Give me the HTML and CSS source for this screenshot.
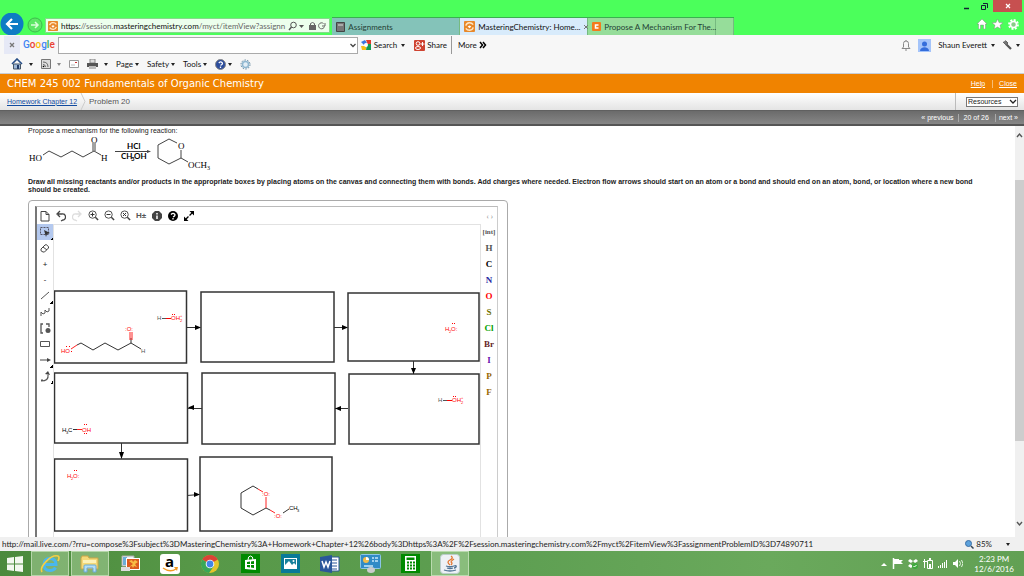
FILE: index.html
```html
<!DOCTYPE html>
<html lang="en">
<head>
  <meta charset="UTF-8" />
  <meta name="viewport" content="width=device-width, initial-scale=1.0"/>
  <title>MasteringChemistry: Homework Chapter 12</title>
  <link rel="stylesheet" href="styles.css">
</head>
<body>
  <!-- shared icons -->
  <svg class="defs" aria-hidden="true">
    <symbol id="mc" viewBox="0 0 12 12"><rect width="12" height="12" rx="1" fill="#e8882a"/><path d="M2 5C3 1 8 1 10 4M10 7c-1 4-6 4-8 1" fill="none" stroke="#ffe6c4" stroke-width="1.6"/><path d="M4 6l2-1 2 1-2 2z" fill="#fff"/></symbol>
    <symbol id="magnifier" viewBox="0 0 12 12"><circle cx="5" cy="5" r="4" fill="none" stroke="#444"/><path d="M8 8l3 3" stroke="#444" stroke-width="1.6"/></symbol>
  </svg>

  <header class="browser">
    <div class="window-buttons">
      <button aria-label="Minimize"><svg width="8" height="10"><path d="M1 7.500h5" stroke="#123" stroke-width="1.500"/></svg></button>
      <button aria-label="Restore"><svg width="8" height="8"><path d="M1.500 3.500h4v4h-4zM3 1.500h4.500V6" fill="none" stroke="#123"/></svg></button>
      <button class="close" aria-label="Close window"><svg width="8" height="8"><path d="M2 2l4 4M6 2L2 6" stroke="#fff" stroke-width="1.200"/></svg></button>
    </div>
    <div class="nav-row">
      <button class="back" aria-label="Back"><svg width="24" height="22" viewBox="0 0 24 22"><circle cx="12" cy="11" r="11.500" fill="#0e7cc4"/><path d="M18 11H7M12 6l-5 5 5 5" fill="none" stroke="#fff" stroke-width="2.200"/></svg></button>
      <button class="forward" aria-label="Forward"><svg width="16" height="16"><circle cx="8" cy="8" r="7" fill="#5be765" stroke="#3dbb4c"/><path d="M4 8h7M8 5l3 3-3 3" fill="none" stroke="#d9ffd9" stroke-width="1.500"/></svg></button>
      <div class="address">
        <svg width="10" height="10"><use href="#mc"/></svg>
        <div class="url" role="textbox" contenteditable="true" aria-label="Address">https:<i>//session.</i>masteringchemistry.com<i>/myct/itemView?assignn</i></div>
        <button aria-label="Search address"><svg width="38" height="10"><circle cx="5.500" cy="4" r="2.800" fill="none" stroke="#555"/><path d="M3.500 6L1 9" stroke="#555" stroke-width="1.400"/><path d="M11 4h5l-2.500 3z" fill="#555"/><path d="M21 4h7v5h-7z" fill="#666"/><path d="M22.500 4V2.500q2-2 4 0V4" fill="none" stroke="#666"/><path d="M37 2v3h-3M36.500 5.500a3 3 0 1 1-1-3" fill="none" stroke="#666"/></svg></button>
      </div>
      <nav class="tabs">
        <a href="#" class="tab tab-first"><svg width="9" height="10"><path d="M.5.500h8v9h-8z" fill="#777" stroke="#444"/><path d="M2 2h5v2H2z" fill="#aaa"/></svg>Assignments</a>
        <a href="#" class="tab active"><svg width="11" height="11"><use href="#mc"/></svg>MasteringChemistry: Home...<svg class="x" width="6" height="6"><path d="M1 1l4 4M5 1L1 5" stroke="#777"/></svg></a>
        <a href="#" class="tab"><svg width="9" height="9"><rect width="9" height="9" rx="1" fill="#f37a1c"/><path d="M6.500 3h-3v3h3" fill="none" stroke="#fff" stroke-width="1.500"/></svg>Propose A Mechanism For The...</a>
        <a href="#" class="new-tab" aria-label="New tab"></a>
      </nav>
      <div class="browser-tools">
        <svg width="10" height="10"><path d="M5 0l5 5H8.500v5h-2V6h-3v4h-2V5H0z" fill="#fff" stroke="#777" stroke-width=".4"/></svg>
        <svg width="11" height="10" viewBox="0 0 11 10"><path d="M5.500 0L7 3.600l4 .2-3 2.400 1 3.800-3.500-2L2 10l1-3.800L0 3.800l4-.2z" fill="#fff" stroke="#777" stroke-width=".4"/></svg>
        <svg width="11" height="11"><circle cx="5.500" cy="5.500" r="4.400" fill="none" stroke="#fff" stroke-width="2" stroke-dasharray="2 1.400"/><circle cx="5.500" cy="5.500" r="3" fill="#8c8" stroke="#fff" stroke-width="1.500"/></svg>
      </div>
    </div>
  </header>

  <div class="google-bar">
    <button class="close-bar" aria-label="Close toolbar"><svg width="6" height="6"><path d="M1 1l4 4M5 1L1 5" stroke="#777" stroke-width="1.300"/></svg></button>
    <span class="google"><b class="blue">G</b><b class="red">o</b><b class="yellow">o</b><b class="blue">g</b><b class="green">l</b><b class="red">e</b></span>
    <div class="google-search"><input type="text" aria-label="Google search"><svg width="8" height="8"><path d="M1.500 3L4 5.500 6.500 3" fill="none" stroke="#444" stroke-width="1.300"/></svg></div>
    <button><svg width="11" height="11"><path d="M5 0h5v5H7z" fill="#e03a2c"/><path d="M0 2l4-2 2 3-3 2z" fill="#3c75df"/><path d="M0 6h5v4H1z" fill="#f5bd18"/><path d="M6 4h4v6H5z" fill="#159a52"/><circle cx="5" cy="5" r="2" fill="#fff"/></svg>Search <span class="caret"></span></button>
    <button class="share"><svg width="11" height="11"><rect width="11" height="11" rx="1" fill="#cf4331"/><circle cx="4" cy="3.500" r="1.800" fill="none" stroke="#fff"/><ellipse cx="4" cy="8" rx="2.500" ry="1.500" fill="none" stroke="#fff"/><path d="M8.500 2v4M6.500 4h4" stroke="#fff"/></svg>Share</button>
    <button>More <svg width="8" height="8"><path d="M1 1l2.500 3L1 7M4 1l2.500 3L4 7" fill="none" stroke="#000" stroke-width="1.500"/></svg></button>
    <div class="account">
      <svg width="10" height="12"><path d="M1 9.500h8L7.500 8V4.500a2.500 2.500 0 0 0-5 0V8zM4 11h2M5 1v1" fill="none" stroke="#888"/></svg>
      <svg width="13" height="13"><path d="M0 0h13v13H0z" fill="#a4c4fa"/><circle cx="6.500" cy="5" r="2.500" fill="#346ddb"/><path d="M2 12c0-5 9-5 9 0z" fill="#346ddb"/></svg>
      <button>Shaun Everett <span class="caret"></span></button>
      <button aria-label="Options"><svg width="10" height="10"><path d="M4 4l5 5" stroke="#555" stroke-width="2.200"/><path d="M1 2l3 3 2-2-2.500-2.500" fill="#777" stroke="#666"/></svg><span class="caret"></span></button>
    </div>
  </div>

  <div class="command-bar">
    <button aria-label="Home"><svg width="12" height="12"><path d="M1 6l5-5 5 5" fill="none" stroke="#274f88" stroke-width="1.600"/><path d="M2.500 6h7v5h-7z" fill="#9db8d8" stroke="#456"/><path d="M6 7h2v4H6z" fill="#223c68"/></svg><span class="caret"></span></button>
    <button aria-label="Feeds"><svg width="10" height="10"><path d="M.5.500h9v9h-9z" fill="#ddd" stroke="#777"/><path d="M2 3q5 0 5 5M2 5.500q2.500 0 2.500 2.500" fill="none" stroke="#666"/><circle cx="2.500" cy="7.500" r=".8"/></svg><span class="caret pale"></span></button>
    <button aria-label="Read mail"><svg width="10" height="8"><path d="M.5.500h9v7h-9z" fill="#fff" stroke="#999"/><path d="M6 2h2v1H6z" fill="#c33"/><path d="M2 5h4" stroke="#bbb"/></svg></button>
    <button aria-label="Print"><svg width="11" height="10"><path d="M3 0h5v4H3z" fill="#ddd" stroke="#888"/><path d="M0 4h11v4H0z" fill="#555"/><path d="M2 7h7v3H2z" fill="#bbb"/></svg><span class="caret"></span></button>
    <button class="menu">Page <span class="caret"></span></button>
    <button class="menu">Safety <span class="caret"></span></button>
    <button class="menu">Tools <span class="caret"></span></button>
    <button class="menu" aria-label="Help"><svg width="11" height="11"><circle cx="5.500" cy="5.500" r="5" fill="#2c4d9c" stroke="#888"/><path d="M3.800 4q1.700-2 3.200-.5T5.500 6.300M5.500 7.500V9" fill="none" stroke="#fff" stroke-width="1.300"/></svg><span class="caret"></span></button>
    <button aria-label="Settings"><svg width="11" height="11"><circle cx="5.500" cy="5.500" r="4.500" fill="none" stroke="#5b8199" stroke-dasharray="1.500 1.300"/><circle cx="5.500" cy="5.500" r="3" fill="#e3eef6" stroke="#8fb7d0" stroke-width="1.500"/></svg></button>
  </div>

  <div class="course-bar">
    <h1>CHEM 245 002 Fundamentals of Organic Chemistry</h1>
    <div class="course-links"><a href="#">Help</a><a href="#" class="split">Close</a></div>
  </div>
  <div class="breadcrumb">
    <a href="#">Homework Chapter 12</a>
    <svg width="8" height="17"><path d="M2 0l4 8.500L2 17" fill="none" stroke="#ccc"/></svg>
    <span>Problem 20</span>
    <div class="resources"><select aria-label="Resources"><option>Resources</option></select><svg width="8" height="6"><path d="M1 1l3 3 3-3" fill="none" stroke="#222" stroke-width="1.300"/></svg></div>
  </div>
  <nav class="pager"><a href="#">« previous</a><span>20 of 26</span><a href="#">next »</a></nav>

  <main>
    <section class="problem">
      <p class="intro">Propose a mechanism for the following reaction:</p>
      <svg class="reaction" width="190" height="42" viewBox="28 134 190 42">
        <g fill="none" stroke="#444">
          <path d="M43 154l6-4 12 6 11-6 11 6 11-6 7 4M93 150v-8M95 150v-8M115 150.500h34"/>
          <path d="M177 142l-8-4-11 6v13l11 6 12-6v-8M181 157l7 4"/>
        </g>
        <path d="M147 149l4 1.500-4 1.500z" fill="#444"/>
        <g class="serif"><text x="29" y="160">HO</text><text x="91" y="142">O</text><text x="101" y="160">H</text><text x="178" y="148">O</text><text x="188" y="167">OCH</text><text x="207" y="169" class="sub">3</text></g>
        <g class="reagent"><text x="127" y="148">HCl</text><text x="121" y="158">CH</text><text x="131" y="160" class="sub">3</text><text x="134" y="158">OH</text></g>
      </svg>
      <p class="directions">Draw all missing reactants and/or products in the appropriate boxes by placing atoms on the canvas and connecting them with bonds. Add charges where needed. Electron flow arrows should start on an atom or a bond and should end on an atom, bond, or location where a new bond should be created.</p>

      <div class="frame">
        <div class="editor">
          <div class="editor-top">
            <button aria-label="New"><svg width="10" height="12"><path d="M1 1.500h5l3 3V11H1zM6 1.500v3h3" fill="none" stroke="#444"/></svg></button>
            <button aria-label="Undo"><svg width="10" height="12"><path d="M2 4h4a3 3 0 0 1 1 6l-2 1M4 1L1 4l3 3" fill="none" stroke="#444" stroke-width="1.300"/></svg></button>
            <button aria-label="Redo"><svg width="10" height="12"><path d="M8 4H4a3 3 0 0 0-1 6l2 1M6 1l3 3-3 3" fill="none" stroke="#ddd" stroke-width="1.300"/></svg></button>
            <button aria-label="Zoom in"><svg width="11" height="11"><use href="#magnifier"/><path d="M2.500 4.500h4M4.500 2.500v4" stroke="#333"/></svg></button>
            <button aria-label="Zoom out"><svg width="11" height="11"><use href="#magnifier"/><path d="M2.500 4.500h4" stroke="#333"/></svg></button>
            <button aria-label="Reset zoom"><svg width="11" height="11"><use href="#magnifier"/><path d="M3 3l3 3M6 3L3 6" stroke="#333"/></svg></button>
            <button>H±</button>
            <button aria-label="Information"><svg width="10" height="10"><path d="M3 0h4l3 3v4l-3 3H3L0 7V3z" fill="#444"/><path d="M5 2v1.500M5 4.500V8" stroke="#fff" stroke-width="1.500"/></svg></button>
            <button aria-label="Help"><svg width="10" height="10"><circle cx="5" cy="5" r="5"/><path d="M3 3.500q2-2 3.500-.5T5 6M5 7v1.500" fill="none" stroke="#fff" stroke-width="1.300"/></svg></button>
            <button aria-label="Full screen"><svg width="10" height="10"><path d="M2 8l6-6" stroke="#000" stroke-width="1.300" stroke-dasharray="3.500 1.500"/><path d="M5.500 0H10v4.500zM0 5.500V10h4.500z"/></svg></button>
            <span class="pages">‹ ›</span>
          </div>
          <div class="editor-body">
            <div class="tools">
              <button class="selected more" aria-label="Select"><svg width="12" height="12"><path d="M1.500 1.500h8v7h-8z" fill="none" stroke="#556" stroke-dasharray="2 1"/><path d="M5 4l6 3-3 1-1 3z" fill="#333"/></svg></button>
              <button aria-label="Erase"><svg width="10" height="10"><path d="M1 6l4-4q1-1 2.500.5T8.500 5l-4 4H3Q0 8 1 6zM3 4l4 3" fill="none" stroke="#444"/></svg></button>
              <button>+</button>
              <button>-</button>
              <button class="more" aria-label="Bond"><svg width="10" height="10"><path d="M1 8l8-7" stroke="#555"/></svg></button>
              <button aria-label="Chain"><svg width="10" height="10"><path d="M1 9V5l2 2 2-1V3l2 2 2-1V1" fill="none" stroke="#555"/></svg></button>
              <button aria-label="Charge"><svg width="11" height="11"><path d="M3 1H1v9h2M6 1h3v3" fill="none" stroke="#555" stroke-width="1.300"/><circle cx="8" cy="7.500" r="2.500" fill="#555"/></svg></button>
              <button aria-label="Rectangle"><svg width="10" height="8"><path d="M.5 1.500h9v5h-9z" fill="none" stroke="#555"/></svg></button>
              <button class="more" aria-label="Arrow"><svg width="11" height="8"><path d="M0 4h8" stroke="#444"/><path d="M7 2l4 2-4 2z" fill="#444"/></svg></button>
              <button class="more" aria-label="Electron flow"><svg width="11" height="11"><path d="M1 10q8 0 7-6M1 9h2" fill="none" stroke="#555" stroke-width="1.200"/><path d="M5 3l3-3 2 4z" fill="#444"/></svg></button>
            </div>
            <!-- mechanism boxes, arrows and molecules -->
            <svg class="canvas" width="428" height="320" viewBox="54 225 426 319" role="img" aria-label="Reaction mechanism">
              <g class="boxes">
                <rect x="54.500" y="291" width="132" height="72"/><rect x="201" y="292" width="133" height="70"/><rect x="348" y="293" width="131" height="68"/>
                <rect x="349" y="374" width="130" height="70"/><rect x="202" y="373" width="133" height="71"/><rect x="54.500" y="373" width="133" height="70"/>
                <rect x="54.500" y="459" width="133" height="72"/><rect x="200" y="457" width="132" height="74"/>
              </g>
              <path class="line" d="M187 327.500h13M334 327.500h13M413.500 361v13M348 408.500h-13M202 408.500h-14M121.500 443v15M187 495.500l12-1"/>
              <path d="M195 325l6 2.500-6 2.500zM342 325l6 2.500-6 2.500zM411 368h5l-2.500 6zM341 406v5l-6-2.500zM194 405v5l-6-2.500zM119 452h5l-2.500 7zM194 492l6 2.500-6 2.500z"/>
              <path class="line" d="M77 345l4-2 12 7 12-7 13 7 13-7 10 6M131 343v-5"/>
              <path d="M71 349l6-4M130 340v-8M132 340v-8" class="oxygen-bond"/>
              <text x="61" y="353" fill="red">HO</text><path d="M66 346h1v1h-1zM69 346h1v1h-1zM71 351h1v1h-1z" fill="red"/>
              <text x="125" y="331" fill="red">:O:</text><text x="141" y="353" fill="#555">H</text>
              <g id="oxonium"><text x="157" y="320" fill="#555">H</text><path d="M162 318.500h4" stroke="#555"/><path d="M166 318.500h5" stroke="red"/><g fill="red"><text x="171" y="320">OH</text><text x="180" y="322" class="sub">2</text><text x="180" y="317" class="sub">+</text><path d="M172 314h1v1h-1zM174 314h1v1h-1z"/></g></g>
              <use href="#oxonium" x="281" y="82"/>
              <g id="water" fill="red"><text x="445" y="331">H</text><text x="449" y="333" class="sub">2</text><text x="451" y="331">O:</text><path d="M452 323h1v1h-1zM454 323h1v1h-1z"/></g>
              <use href="#water" x="-378" y="147"/>
              <text x="62" y="432">H</text><text x="66" y="434" class="sub">3</text><text x="68" y="432">C</text><path class="line" d="M73 429.500h4"/><path class="oxygen-bond" d="M77 429.500h5"/><text x="82" y="432" fill="red">OH</text><path d="M84 424h1v1h-1zM86 424h1v1h-1zM84 433h1v1h-1zM86 433h1v1h-1z" fill="red"/>
              <path class="line" d="M258 489l-5-3-12 7v15l12 7 13-7 4 2M283 513l6-4"/>
              <path class="oxygen-bond" d="M258 489l5 3M266 497v11M270 510l5 3"/>
              <text x="262" y="496" fill="red">:O:</text><text x="274" y="518" fill="red">:O:</text><text x="289" y="510">CH</text><text x="297" y="512" class="sub">3</text>
            </svg>
            <div class="elements">
              <button class="info">[int]</button><button>H</button><button class="c">C</button><button class="n">N</button><button class="o">O</button><button class="s">S</button><button class="cl">Cl</button><button class="br">Br</button><button class="i">I</button><button class="p">P</button><button class="p">F</button>
            </div>
          </div>
        </div>
      </div>
    </section>
    <div class="scrollbar"><svg width="9" height="8"><path d="M2 5l2.500-3L7 5" fill="none" stroke="#555" stroke-width="1.400"/></svg><div class="thumb"></div><svg width="9" height="8"><path d="M2 2l2.500 3L7 2" fill="none" stroke="#555" stroke-width="1.400"/></svg></div>
  </main>

  <div class="status-bar">
    <span class="link-target">http://mail.live.com/?rru=compose%3Fsubject%3DMasteringChemistry%3A+Homework+Chapter+12%26body%3Dhttps%3A%2F%2Fsession.masteringchemistry.com%2Fmyct%2FitemView%3FassignmentProblemID%3D74890711</span>
    <button><svg width="9" height="9"><circle cx="3.500" cy="3.500" r="3" fill="#5da2dc" stroke="#3a6ea5"/><path d="M6 6l2.500 2.500" stroke="#345" stroke-width="1.500"/></svg>85% <span class="caret"></span></button>
  </div>

  <footer class="taskbar">
    <button class="start" aria-label="Start"><svg width="16" height="16"><path d="M0 2l7-1v6.500H0zM8 1l8-1v7.500H8zM0 8.500h7V15l-7-1zM8 8.500h8V16l-8-1z" fill="#f3f8ef"/></svg></button>
    <button class="open" aria-label="Internet Explorer"><svg width="20" height="20"><path d="M5 10.500h11q0-6-6-6t-6 6 6 6q4 0 5.500-3" fill="none" stroke="#49b7ee" stroke-width="3"/><path d="M2 18C-1 13 11 0 18 2c2 1 1 3 0 5" fill="none" stroke="#f5cf44" stroke-width="1.600"/></svg></button>
    <button class="open" aria-label="File Explorer"><svg width="20" height="20"><path d="M1 4l1-2h6l1 2h9v11H1z" fill="#f4d978" stroke="#c8a548"/><path d="M3 6h13v3H3z" fill="#fdf2b8"/><path d="M4 18v-6q0-1 1-1h10q1 0 1 1v6h-3v-4H7v4z" fill="#b4def5" stroke="#69a9d4"/></svg></button>
    <button aria-label="Photo Gallery"><svg width="20" height="18"><path d="M2 1h12v10H2z" fill="#e8f0f6" stroke="#aaa"/><path d="M3 2h4v8H3z" fill="#6caed8"/><path d="M6 3h14v12H6z" fill="#fff"/><path d="M7 4h12v10H7z" fill="#db5a20"/><path d="M13 9L9 6l3-1 1 2 2-2 3 2-3 2 2 3-3-1-1 2-1-2-3 1z" fill="#f9bd45"/><path d="M1 12h9v4H1z" fill="#ddd"/></svg></button>
    <button aria-label="Amazon"><svg width="20" height="20"><rect width="20" height="20" rx="3" fill="#fff"/><text x="5" y="13" class="amazon">a</text><path d="M3 14q7 5 13 1" fill="none" stroke="#f39a22" stroke-width="1.500"/><path d="M14 13l4 0-1 4z" fill="#f39a22"/></svg></button>
    <button aria-label="Chrome"><svg width="20" height="20"><circle cx="10" cy="10" r="9" fill="#e4c52c"/><path d="M10 10L2.200 5.500a9 9 0 0 1 15.600 0z" fill="#db4337"/><path d="M10 10L2.200 5.500A9 9 0 0 0 9 19l5-7z" fill="#39a757"/><circle cx="10" cy="10" r="4.300" fill="#fff"/><circle cx="10" cy="10" r="3.400" fill="#4286e8"/></svg></button>
    <button aria-label="Store"><svg width="19" height="19"><path d="M0 0h19v19H0z" fill="#008a00"/><path d="M4 6l11-1v11l-11-1z" fill="#fff"/><path d="M7 6q0-4 2.500-4T12 6" fill="none" stroke="#fff"/><path d="M6 8l3-.4V10H6zM10 7.500l3-.4V10h-3zM6 11h3v2.500L6 13zM10 11h3v3l-3-.4z" fill="#008a00"/></svg></button>
    <button aria-label="Photos"><svg width="19" height="19"><path d="M0 0h19v19H0z" fill="#087a98"/><path d="M3 4h13v11H3z" fill="#fff"/><path d="M4 5h11v9H4z" fill="#16809b"/><path d="M4 14v-3l4-4 3 4 2-2 2 2v3z" fill="#fff"/><circle cx="12.500" cy="7" r="1" fill="#fff"/></svg></button>
    <button aria-label="Word"><svg width="20" height="18"><path d="M9 2h10v14H9z" fill="#fff" stroke="#2a579a"/><path d="M11 5h6M11 8h6M11 11h6M11 14h6" stroke="#2a579a"/><path d="M0 2l12-2v18L0 16z" fill="#2a579a"/><path d="M2 6l2 6 2-5 2 5 2-6" fill="none" stroke="#fff" stroke-width="1.500"/></svg></button>
    <button aria-label="Control Panel"><svg width="21" height="19"><rect x=".5" y=".500" width="20" height="14" rx="1" fill="#318bc6" stroke="#8cc5e6"/><circle cx="6" cy="6" r="3" fill="#f1bd4c"/><path d="M6 6V3a3 3 0 0 1 3 3z" fill="#fff"/><path d="M12 4h2M15 4h3M12 7h2M15 7h3M4 12h9" stroke="#c6e8fa" stroke-width="1.500"/><ellipse cx="11" cy="16" rx="4" ry="3" fill="#ccc"/></svg></button>
    <button aria-label="Calculator"><svg width="19" height="19"><path d="M0 0h19v19H0z" fill="#008a00"/><path d="M4 2h11v15H4z" fill="#fff"/><path d="M5.500 3.500h8v2.500h-8z" fill="#008a00"/><path d="M6 8.500h8M6 11.500h8M6 14.500h8" stroke="#008a00" stroke-width="2" stroke-dasharray="2 1"/></svg></button>
    <button class="open" aria-label="Java"><svg width="20" height="20"><rect x=".5" y=".500" width="19" height="19" rx="3" fill="#eef1f5" stroke="#bcc"/><path d="M10 11q-4-3 0-5t1-4M11 11q2-2 0-3 0-1 3-3" fill="none" stroke="#e37631" stroke-width="1.300"/><path d="M6 12q4 1.500 8 0M7 14q3 1 6 0M14 12q3-1 2 1-1 1-2 1M4 16q6 2 12 0" fill="none" stroke="#527494" stroke-width="1.300"/></svg></button>
    <div class="tray">
      <svg width="6" height="4"><path d="M0 4l3-3 3 3z" fill="#fff"/></svg>
      <svg width="11" height="11"><path d="M1.500 0v11" stroke="#fff" stroke-width="1.500"/><path d="M2 1h5v5H2zM6 2h5L9 4l2 2H6z" fill="#fff"/></svg>
      <svg width="10" height="11"><path d="M2 1l3 2-2 2-3-2zM8 1l2 2-3 2-2-2zM2 6l3 2-2 2-3-2z" fill="#fff"/><circle cx="7" cy="8" r="3" fill="#3faa3d"/><path d="M5.500 8l1 1 2-2" fill="none" stroke="#fff"/></svg>
      <svg width="10" height="11"><path d="M4.500 2.500h5v8h-5zM1.500 1v9M0 3.500h4" fill="none" stroke="#fff"/><path d="M6 6h2v4H6zM6 0h2v2H6z" fill="#fff"/></svg>
      <svg width="10" height="11"><path d="M.5 10V8M2.500 10V7M4.500 10V5M6.500 10V4M8.500 10V2" stroke="#fff"/></svg>
      <svg width="10" height="11"><path d="M0 4h2l3-3v9L2 7H0z" fill="#fff"/><path d="M6.500 3q2 2.500 0 5M8.500 2q3 3.500 0 7" fill="none" stroke="#e6f4e2"/></svg>
      <div class="clock">2:23 PM<br>12/6/2016</div>
    </div>
  </footer>
</body>
</html>
```
FILE: styles.css
```css
* {
  box-sizing: border-box;
}
html, body {
  margin: 0;
  padding: 0;
  height: 100%;
}
body {
  display: flex;
  flex-direction: column;
  overflow: hidden;
  font-family: Lato, "Open Sans", sans-serif;
  font-size: 8px;
  line-height: 12px;
  color: #222;
  background: #fff;
}
button {
  display: flex;
  align-items: center;
  gap: 2px;
  padding: 0;
  border: 0;
  background: none;
  color: inherit;
  font: inherit;
}
svg {
  display: block;
  flex: none;
}
.defs {
  position: absolute;
  width: 0;
  height: 0;
}
.caret {
  border: 2px solid transparent;
  border-top: 3px solid #222;
  border-bottom: 0;
  margin-left: 2px;
}
.pale { border-top-color: #888; }

/* browser chrome */
.browser {
  flex: none;
  background: #4bff5b;
}
.window-buttons {
  display: flex;
  justify-content: flex-end;
  height: 12px;
  margin-bottom: 1px;
}
.window-buttons button {
  width: 17px;
  justify-content: center;
}
.window-buttons .close {
  width: 29px;
  margin: 0 2px 0 1px;
  background: #c75050;
}
.nav-row {
  display: flex;
  align-items: flex-end;
  height: 22px;
}
.back { margin-right: 3px; }
.forward { margin: 0 2px 2px 0; }
.address {
  flex: 0 1 282px;
  display: flex;
  align-items: center;
  justify-content: space-between;
  height: 15px;
  margin: 0 2px 2px 0;
  padding: 0 3px 0 2px;
  background: #ecffed;
  border: 1px solid #84db8b;
}
.url {
  flex: 1;
  margin: 0 3px;
  white-space: nowrap;
  color: #111;
}
.url i {
  font-style: normal;
  color: #666;
}
.tabs {
  display: flex;
  height: 18px;
  border-top: 1px solid #3aaf51;
}
.tab, .new-tab {
  display: flex;
  align-items: center;
  gap: 3px;
  width: 128px;
  padding: 0 4px;
  background: #96dd9a;
  border-right: 1px solid #76ba80;
  color: #243f35;
  text-decoration: none;
  white-space: nowrap;
}
.tab-first { background: #84c3b9; }
.tab.active {
  background: #d8ebfb;
  color: #111;
}
.tab .x { margin-left: auto; }
.new-tab { width: 18px; }
.browser-tools {
  display: flex;
  gap: 5px;
  margin: 0 5px 5px auto;
}

/* toolbars */
.google-bar, .command-bar {
  flex: none;
  display: flex;
  align-items: center;
  background: #f7f7f7;
  color: #111;
}
.google-bar {
  height: 20px;
  padding: 0 4px;
  gap: 3px;
}
.close-bar {
  width: 16px;
  height: 18px;
  justify-content: center;
  background: #e6e9f6;
}
.google {
  font-family: Roboto, sans-serif;
  font-size: 10px;
}
.google b { font-weight: 500; }
.blue { color: #4285f4; }
.red { color: #ea4335; }
.yellow { color: #fbbc05; }
.green { color: #34a853; }
.google-search {
  flex: 0 1 300px;
  display: flex;
  align-items: center;
  height: 17px;
  border: 1px solid #aaa;
  background: #fff;
}
.google-search input {
  flex: 1;
  min-width: 0;
  height: 15px;
  padding: 0 2px;
  border: 0;
  background: none;
}
.google-bar .share {
  height: 18px;
  margin: 0 3px 0 6px;
  padding-right: 4px;
  border-right: 1px solid #999;
}
.account {
  display: flex;
  align-items: center;
  gap: 7px;
  margin-left: auto;
}
.command-bar {
  height: 19px;
  padding: 0 11px;
  gap: 8px;
  border-bottom: 1px solid #c8cdd6;
}
.command-bar button { gap: 4px; }
.command-bar .menu { gap: 0; }

/* course header */
.course-bar {
  flex: none;
  display: flex;
  align-items: center;
  justify-content: space-between;
  height: 19px;
  padding: 0 7px;
  background: #f08300;
  color: #fff;
}
.course-bar h1 {
  margin: 0;
  font: 400 10px/16px "DejaVu Sans", sans-serif;
}
.course-links {
  display: flex;
  font: 7px/8px "Liberation Sans", sans-serif;
}
.course-links a { color: #fff; }
.course-links .split {
  margin-left: 7px;
  padding-left: 6px;
  border-left: 1px solid #f7bd77;
}
.breadcrumb {
  flex: none;
  display: flex;
  align-items: center;
  gap: 2px;
  height: 17px;
  padding: 0 7px;
  background: linear-gradient(#fff, #e4e4e4);
  font: 8px/10px "Liberation Sans", sans-serif;
  color: #555;
}
.breadcrumb a {
  font-size: 7px;
  color: #114a9f;
}
.resources {
  display: flex;
  align-items: center;
  height: 17px;
  margin-left: auto;
  padding-left: 10px;
  border-left: 1px solid #bbb;
}
.resources select {
  width: 52px;
  height: 10px;
  padding: 0 1px;
  border: 1px solid #777;
  appearance: none;
  background: #fff;
  color: #222;
  font: 7px/8px "Liberation Sans", sans-serif;
}
.resources svg {
  margin-left: -9px;
  pointer-events: none;
}
.pager {
  flex: none;
  display: flex;
  align-items: center;
  justify-content: flex-end;
  height: 16px;
  padding: 0 6px;
  border-top: 1px solid #606060;
  border-bottom: 2px solid #555;
  background: linear-gradient(#6b6b6b, #868686);
  color: #fff;
  font: 7px/8px "Liberation Sans", sans-serif;
}
.pager a {
  color: #fff;
  text-decoration: none;
}
.pager span {
  margin: 0 3px 0 4px;
  padding: 0 6px 0 5px;
  border: solid #aaa;
  border-width: 0 1px;
}

/* problem */
main {
  flex: 1;
  min-height: 0;
  display: flex;
}
.problem {
  flex: 1;
  min-width: 0;
  overflow: hidden;
  padding: 0 28px;
}
.problem p {
  margin: 0;
  font: 7px/8px "Liberation Sans", sans-serif;
}
.problem .intro { padding-top: 1px; }
.problem .directions {
  margin: 1px 0 6px;
  font-weight: 700;
}
.reaction .serif {
  font: 9px "Liberation Serif", serif;
}
.reaction .reagent {
  font: 700 8px Lato, sans-serif;
}
.reaction .sub { font-size: 6px; }
.frame {
  width: 480px;
  max-width: 100%;
  padding: 5px 9px 0 6px;
  border: 1px solid #aaa;
  border-radius: 4px;
}
.editor {
  border: solid #777;
  border-width: 1px 1px 0 2px;
  border-top-color: #bbb;
  border-right-color: #ccc;
}
.editor-top {
  display: flex;
  align-items: center;
  height: 17px;
}
.editor-top button {
  width: 16px;
  justify-content: center;
  font: 700 8px "Liberation Sans", sans-serif;
  color: #555;
}
.pages {
  margin-left: auto;
  padding-right: 4px;
  color: #888;
}
.editor-body { display: flex; }
.tools {
  flex: none;
  width: 16px;
}
.tools button {
  width: 16px;
  height: 16px;
  justify-content: center;
}
.tools .selected { background-color: #b4c9ef; }
.tools .more {
  background-image: linear-gradient(135deg, transparent 50%, #000 50%);
  background-size: 3px 3px;
  background-position: right bottom;
  background-repeat: no-repeat;
}
.canvas {
  flex: 0 1 auto;
  border: solid #e2e2e2;
  border-width: 1px 1px 0;
}
.canvas text {
  font-family: "Liberation Sans", sans-serif;
  font-size: 6px;
}
.canvas .sub { font-size: 4px; }
.boxes {
  fill: none;
  stroke: #333;
  stroke-width: 1.500;
}
.line {
  fill: none;
  stroke: #333;
}
.oxygen-bond {
  fill: none;
  stroke: #f22;
}
.elements { flex: 1; }
.elements button {
  width: 100%;
  height: 16px;
  justify-content: center;
  font: 700 9px "Liberation Serif", serif;
  color: #555;
}
.elements .info { font-size: 7px; }
.elements .c { color: #000; }
.elements .n { color: #2929a3; }
.elements .o { color: #f00; }
.elements .s { color: #707000; }
.elements .cl { color: #00a000; }
.elements .br { color: #642424; }
.elements .i { color: #6a0dad; }
.elements .p { color: #996600; }
.scrollbar {
  flex: none;
  display: flex;
  flex-direction: column;
  width: 9px;
  padding: 6px 0 9px;
  background: #f0f0f0;
}
.thumb {
  height: 66%;
  margin: 40px 0 auto;
  background: #cdcdcd;
}

/* status bar and taskbar */
.status-bar {
  flex: none;
  display: flex;
  align-items: center;
  height: 14px;
  padding: 0 14px 0 2px;
  background: #f0f0f0;
  color: #222;
}
.link-target {
  flex: 1;
  min-width: 0;
  overflow: hidden;
  white-space: nowrap;
}
.status-bar .caret { margin-left: 12px; }
.taskbar {
  flex: none;
  display: flex;
  align-items: center;
  height: 25px;
  background: linear-gradient(90deg, #4b8a3c, #579848 20%, #5e9f52 50%, #6aa95c 75%, #62a054);
  color: #fff;
}
.taskbar button {
  width: 38px;
  height: 25px;
  margin: 0 1px;
  justify-content: center;
}
.taskbar .start {
  width: 30px;
  margin: 0;
}
.taskbar .open {
  background: rgba(220, 245, 205, .35);
  border: 1px solid rgba(235, 250, 225, .5);
}
.amazon {
  font: 700 15px "Open Sans", sans-serif;
}
.tray {
  display: flex;
  align-items: center;
  gap: 5px;
  margin-left: auto;
  padding-right: 10px;
}
.clock {
  margin-left: 6px;
  line-height: 10px;
  text-align: center;
}
```
